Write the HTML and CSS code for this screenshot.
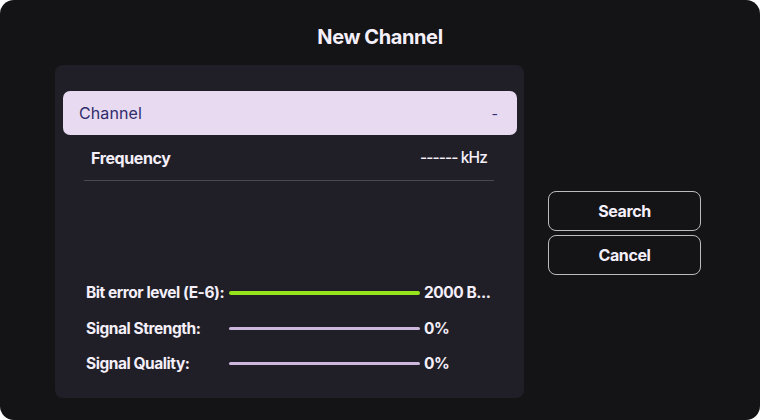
FILE: index.html
```html
<!DOCTYPE html>
<html>
<head>
<meta charset="utf-8">
<link rel="stylesheet" href="styles.css">
</head>
<body>
<div class="screen">
  <h1 class="title">New Channel</h1>
  <div class="main">
    <div class="panel">
      <div class="row row-active">
        <span class="row-label">Channel</span>
        <span class="row-value">-</span>
      </div>
      <div class="row row-freq">
        <span class="freq-label">Frequency</span>
        <span class="freq-value">------ kHz</span>
      </div>
      <div class="meters">
        <div class="meter">
          <span class="meter-label">Bit error level (E-6):</span>
          <span class="bar bar-green"></span>
          <span class="meter-value">2000 B...</span>
        </div>
        <div class="meter">
          <span class="meter-label">Signal Strength:</span>
          <span class="bar bar-lav"></span>
          <span class="meter-value">0%</span>
        </div>
        <div class="meter">
          <span class="meter-label">Signal Quality:</span>
          <span class="bar bar-lav"></span>
          <span class="meter-value">0%</span>
        </div>
      </div>
    </div>
    <div class="actions">
      <button class="btn">Search</button>
      <button class="btn">Cancel</button>
    </div>
  </div>
</div>
</body>
</html>
```
FILE: styles.css
```css
html, body {
  margin: 0;
  padding: 0;
  background: #ffffff;
}
body {
  font-family: Inter, "Liberation Sans", sans-serif;
  color: #f5effa;
}
.screen {
  width: 760px;
  height: 420px;
  background: #141416;
  border-radius: 14px;
  overflow: hidden;
  display: flex;
  flex-direction: column;
}
.title {
  margin: 0;
  padding-top: 25px;
  height: 65px;
  box-sizing: border-box;
  text-align: center;
  font-size: 20px;
  font-weight: 700;
  letter-spacing: -0.4px;
  line-height: 24px;
  color: #f5effa;
}
.main {
  display: flex;
  padding-left: 55px;
}
.panel {
  width: 469px;
  height: 333px;
  background: #201f27;
  border-radius: 8px;
  box-sizing: border-box;
  padding: 26px 7px 0 8px;
  display: flex;
  flex-direction: column;
}
.row {
  display: flex;
  align-items: center;
  justify-content: space-between;
}
.row-active {
  height: 44px;
  background: #e7daf1;
  border-radius: 7px;
  padding: 0 19px 0 16px;
  color: #2f2c6a;
  font-size: 16px;
}
.row-label {
  letter-spacing: 0.1px;
}
.row-value {
  font-size: 14px;
}
.row-freq {
  height: 46px;
  margin: 0 23px 0 21px;
  padding: 0 7px 0 7px;
  border-bottom: 1px solid #4a4951;
  box-sizing: border-box;
  font-size: 16px;
}
.freq-label {
  font-weight: 700;
  letter-spacing: -0.4px;
}
.freq-value {
  font-size: 15.5px;
  font-weight: 500;
  letter-spacing: -0.9px;
}
.meters {
  margin-top: 101px;
  padding-left: 23px;
  display: flex;
  flex-direction: column;
  gap: 14.5px;
}
.meter {
  display: grid;
  grid-template-columns: 139px 191px auto;
  column-gap: 4px;
  align-items: center;
  height: 21px;
}
.meter-label,
.meter-value {
  font-size: 15.5px;
  font-weight: 700;
  letter-spacing: -0.45px;
  white-space: nowrap;
}
.bar {
  display: block;
  width: 191px;
  border-radius: 2px;
}
.bar-green {
  height: 4px;
  background: #97e41c;
}
.bar-lav {
  height: 3px;
  background: #cdb7dc;
}
.actions {
  display: flex;
  flex-direction: column;
  gap: 4px;
  margin-left: 24px;
  margin-top: 126px;
}
.btn {
  width: 153px;
  height: 40px;
  background: transparent;
  border: 1px solid #bdbbc0;
  border-radius: 8px;
  color: #f5effa;
  font-family: Inter, "Liberation Sans", sans-serif;
  font-size: 16px;
  font-weight: 700;
  letter-spacing: -0.4px;
  padding: 0;
}
```
